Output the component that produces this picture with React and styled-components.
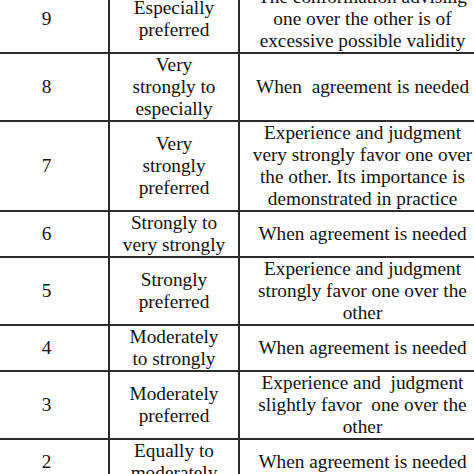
import React from 'react';
import styled, { createGlobalStyle } from 'styled-components';

const GlobalStyle = createGlobalStyle`
  html, body {
    margin: 0;
    padding: 0;
    background: #fff;
  }
`;

const Page = styled.div`
  width: 474px;
  height: 474px;
  overflow: hidden;
  background: #fff;
`;

// the table is wider and taller than the crop, so it is shifted up and left
const Table = styled.table`
  border-collapse: collapse;
  table-layout: fixed;
  width: 502px;
  margin-top: -16px;
  margin-left: -17px;
  font-family: 'Liberation Serif', 'Times New Roman', serif;
  font-size: 19.3px;
  line-height: 22px;
  color: #111;
`;

const Col = styled.col`
  width: ${props => props.w}px;
`;

const Cell = styled.td`
  border: 2px solid #2b2b2b;
  padding: 0;
  text-align: center;
  vertical-align: middle;
  white-space: pre;
  overflow: visible;
`;

const rows = [
  {
    n: '9',
    level: 'Especially\npreferred',
    note: 'The conformation advising\none over the other is of\nexcessive possible validity',
  },
  { n: '8', level: 'Very\nstrongly to\nespecially', note: 'When  agreement is needed' },
  {
    n: '7',
    level: 'Very\nstrongly\npreferred',
    note:
      'Experience and judgment\nvery strongly favor one over\nthe other. Its importance is\ndemonstrated in practice',
  },
  { n: '6', level: 'Strongly to\nvery strongly', note: 'When agreement is needed' },
  {
    n: '5',
    level: 'Strongly\npreferred',
    note: 'Experience and judgment\nstrongly favor one over the\nother',
  },
  { n: '4', level: 'Moderately\nto strongly', note: 'When agreement is needed' },
  {
    n: '3',
    level: 'Moderately\npreferred',
    note: 'Experience and  judgment\nslightly favor  one over the\nother',
  },
  { n: '2', level: 'Equally to\nmoderately', note: 'When agreement is needed' },
];

export default function App() {
  return (
    <Page>
      <GlobalStyle />
      <Table>
        <colgroup>
          <Col w={125} />
          <Col w={130} />
          <Col w={247} />
        </colgroup>
        <tbody>
          {rows.map(row => (
            <tr key={row.n}>
              <Cell>{row.n}</Cell>
              <Cell>{row.level}</Cell>
              <Cell>{row.note}</Cell>
            </tr>
          ))}
        </tbody>
      </Table>
    </Page>
  );
}
